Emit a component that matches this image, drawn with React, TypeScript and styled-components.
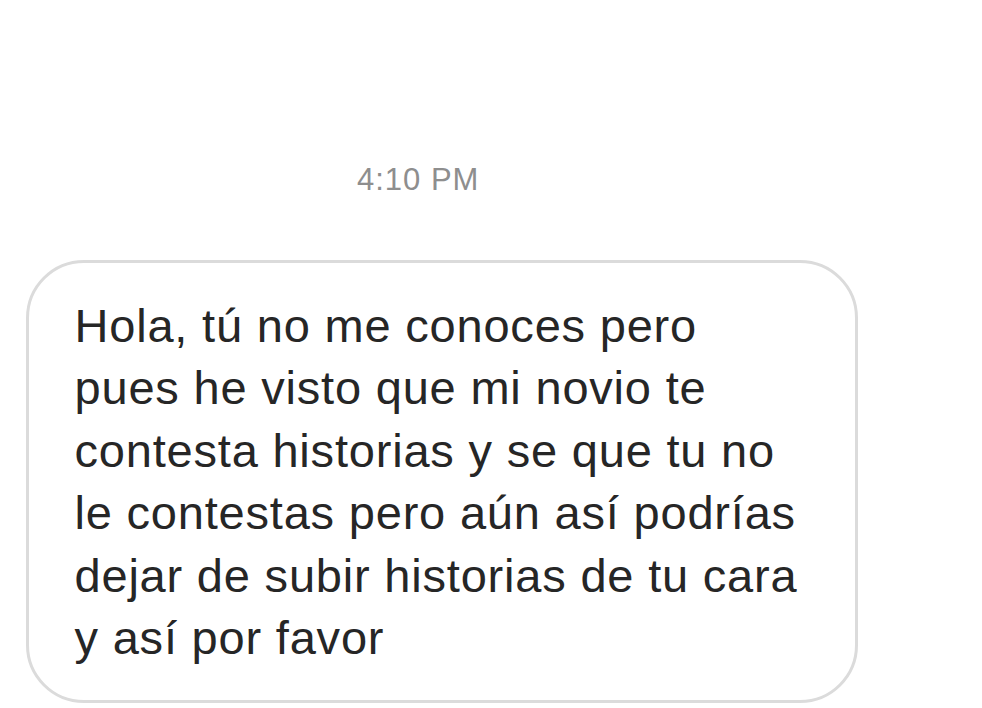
import React from "react";
import styled, { createGlobalStyle } from "styled-components";

const Global = createGlobalStyle`
  html, body { margin: 0; padding: 0; background: #ffffff; }
  body { font-family: "Liberation Sans", Arial, sans-serif; }
`;

const Page = styled.div`
  width: 982px;
  height: 708px;
  overflow: hidden;
  display: flex;
  flex-direction: column;
  padding-top: 160px;
  box-sizing: border-box;
`;

const Timestamp = styled.div`
  padding-left: 357px;
  font-size: 31px;
  line-height: 40px;
  letter-spacing: 1px;
  color: #8e8e8e;
`;

const Bubble = styled.div`
  margin-top: 60px;
  margin-left: 26px;
  width: 832px;
  height: 443px;
  box-sizing: border-box;
  border: 3px solid #dbdbdb;
  border-radius: 58px;
  padding: 31.5px 0 0 45.5px;
`;

const Line = styled.div`
  font-size: 47px;
  line-height: 62.6px;
  letter-spacing: 0.8px;
  color: #262626;
  white-space: nowrap;
`;

const lines = [
  "Hola, tú no me conoces pero",
  "pues he visto que mi novio te",
  "contesta historias y se que tu no",
  "le contestas pero aún así podrías",
  "dejar de subir historias de tu cara",
  "y así por favor",
];

export default function App() {
  return (
    <Page>
      <Global />
      <Timestamp>4:10 PM</Timestamp>
      <Bubble>
        {lines.map((l) => (
          <Line key={l}>{l}</Line>
        ))}
      </Bubble>
    </Page>
  );
}
